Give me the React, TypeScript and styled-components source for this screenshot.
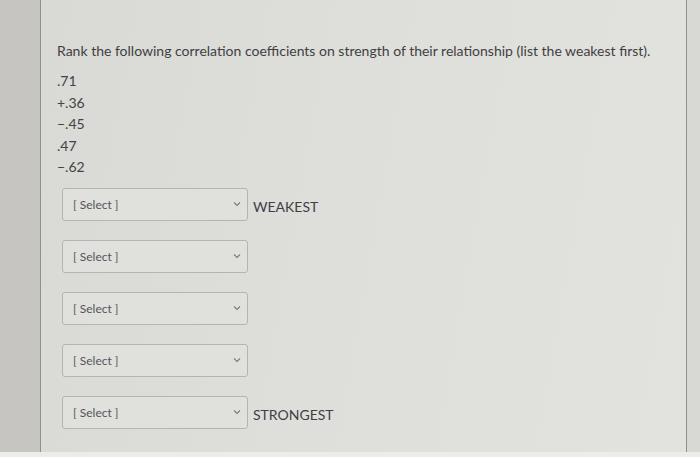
import React from "react";
import styled, { createGlobalStyle } from "styled-components";

const Global = createGlobalStyle`
  html, body { margin: 0; padding: 0; }
  body {
    background: #c7c6c3;
    font-family: Lato, "Open Sans", sans-serif;
    width: 700px;
    height: 457px;
    overflow: hidden;
  }
`;

const Page = styled.div`
  display: flex;
  width: 700px;
  height: 452px;
  border-bottom: 5px solid #ececea;
`;

const Gutter = styled.div<{ $w: number; $bg: string }>`
  width: ${(p) => p.$w}px;
  flex: none;
  background: ${(p) => p.$bg};
`;

const Panel = styled.div`
  flex: 1;
  border-left: 1px solid #8f8f8c;
  border-right: 1px solid #8f8f8c;
  background: linear-gradient(100deg, #d9d9d6 0%, #dededb 45%, #e2e2df 100%);
  padding: 41px 0 0 16px;
  color: #3f3f42;
`;

const Title = styled.p`
  margin: 0;
  font-size: 14px;
  line-height: 20px;
`;

const Values = styled.ul`
  list-style: none;
  margin: 9px 0 0;
  padding: 0;
  font-size: 14px;
  line-height: 21.5px;
  color: #434346;
`;

const Answers = styled.div`
  display: flex;
  flex-direction: column;
  gap: 19px;
  margin-top: 10px;
  padding-left: 5px;
`;

const Row = styled.div`
  display: flex;
  align-items: center;
  gap: 5px;
`;

const SelectBox = styled.div`
  box-sizing: border-box;
  width: 186px;
  height: 33px;
  border: 1px solid #b4b4b1;
  border-radius: 3px;
  background: #e0e0dd;
  display: flex;
  align-items: center;
  justify-content: space-between;
  padding: 0 6px 0 10px;
  font-size: 12px;
  color: #55555a;
`;

const Label = styled.span`
  font-size: 14px;
  color: #404044;
  padding-top: 4px;
`;

const Chevron = () => (
  <svg width="8" height="6" viewBox="0 0 8 6">
    <path d="M1 1.5 L4 4.5 L7 1.5" fill="none" stroke="#7a7a80" strokeWidth="1.1" />
  </svg>
);

const values = [".71", "+.36", "\u2212.45", ".47", "\u2212.62"];
const labels = ["WEAKEST", "", "", "", "STRONGEST"];

export default function App() {
  return (
    <>
      <Global />
      <Page>
        <Gutter $w={40} $bg="#c6c5c2" />
        <Panel>
          <Title>
            Rank the following correlation coefficients on strength of their relationship (list the weakest first).
          </Title>
          <Values>
            {values.map((v) => (
              <li key={v}>{v}</li>
            ))}
          </Values>
          <Answers>
            {labels.map((l, i) => (
              <Row key={i}>
                <SelectBox>
                  <span>[ Select ]</span>
                  <Chevron />
                </SelectBox>
                {l && <Label>{l}</Label>}
              </Row>
            ))}
          </Answers>
        </Panel>
        <Gutter $w={13} $bg="#d8d8d5" />
      </Page>
    </>
  );
}
